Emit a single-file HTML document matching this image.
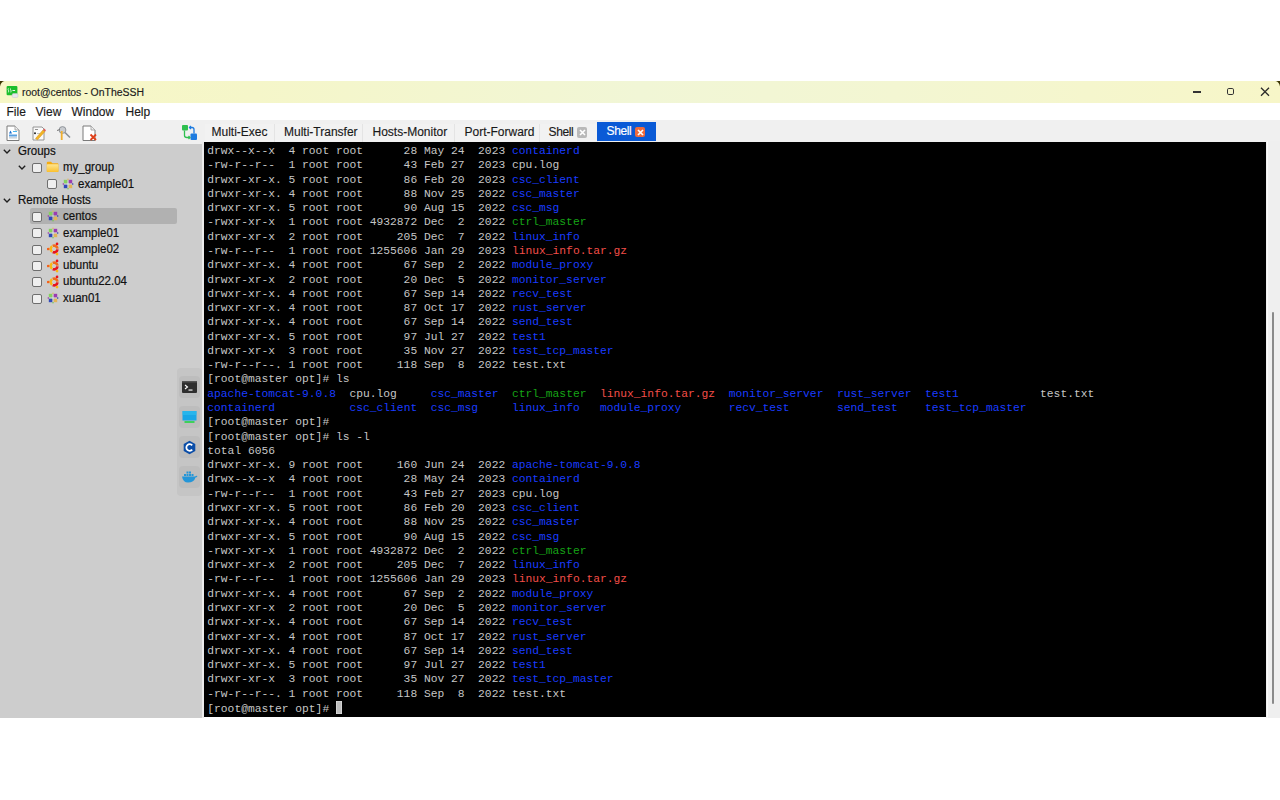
<!DOCTYPE html>
<html><head><meta charset="utf-8">
<style>
html,body{margin:0;padding:0;width:1280px;height:800px;overflow:hidden;background:#fff;}
body{position:relative;font-family:"Liberation Sans",sans-serif;color:#1a1a1a}
.a{position:absolute}
#title{left:0;top:81px;width:1280px;height:22.4px;background:linear-gradient(90deg,#f7f7c6 0%,#f5f6c9 20%,#f1f6d6 50%,#f3f6d2 70%,#f7f6c8 100%)}
#menu{left:0;top:103px;width:1280px;height:17px;background:#fff}
#tool{left:0;top:120px;width:1280px;height:24px;background:#f0f0f0}
#left{left:0;top:144px;width:202px;height:574px;background:#cdcdcd}
#strip{left:202px;top:142px;width:2px;height:576px;background:#ececec}
#term{left:204px;top:142px;width:1062.5px;height:575px;background:#000;overflow:hidden}
#sb{left:1266px;top:141px;width:14px;height:577px;background:#efefef}
#sbw{left:1266.5px;top:141px;width:1.5px;height:577px;background:#fafafa}
#thumb{left:1272px;top:312px;width:2px;height:392px;background:#8a8a8a;border-radius:1px}
.t{position:absolute;font-size:12px;white-space:nowrap;line-height:14px;-webkit-text-stroke:0.15px currentColor}
.tl{position:absolute;left:3.3px;font-family:"Liberation Mono",monospace;font-size:11.29px;line-height:14.28px;height:14.28px;color:#c6c6c6;white-space:pre}
.cur{display:inline-block;width:6.4px;height:13.2px;background:#bdbdbd;vertical-align:-2px;box-shadow:inset 0 0 0 0.6px #e0e0e0}
.tab{position:absolute;top:123.5px;height:18px;background:#f2f2f2;border-right:1px solid #e4e4e4}
.tabt{position:absolute;font-size:12px;white-space:nowrap;color:#1a1a1a;-webkit-text-stroke:0.15px currentColor}
.cb{position:absolute;width:8px;height:8px;border:1.2px solid #6e6e6e;border-radius:2px;background:#efefef}
.tr{position:absolute;font-size:12.4px;white-space:nowrap;color:#101010;-webkit-text-stroke:0.2px #101010;transform:scaleX(.928);transform-origin:0 0}
.chev{position:absolute}
</style></head><body>
<div id="title" class="a"></div>
<svg class="a" style="left:0;top:81px" width="5" height="6" viewBox="0 0 5 6"><path d="M0 0H4.5Q1 0.6 0 5.5Z" fill="#3a3400"/></svg>
<svg class="a" style="left:1275px;top:81px" width="5" height="6" viewBox="0 0 5 6"><path d="M5 0H0.5Q4 0.6 5 5.5Z" fill="#3a3400"/></svg>
<!-- app icon -->
<svg class="a" style="left:6px;top:85px" width="13" height="13" viewBox="0 0 13 13">
 <rect x="0.6" y="0.9" width="10.8" height="9.3" rx="1" fill="#1bbf2c"/>
 <path d="M2.6 3.4Q1.6 3.6 2.2 4.8Q3.2 5.8 2.4 7.4M5 3.4Q4 3.6 4.6 4.8Q5.6 5.8 4.8 7.4" fill="none" stroke="#d8f5d8" stroke-width="0.9"/>
 <rect x="6.5" y="5" width="2.6" height="1" fill="#e8f8e8"/>
 <rect x="6.2" y="8.6" width="5.8" height="3.9" rx="1.2" fill="#e6e6ee" stroke="#c8c8d0" stroke-width="0.5"/>
</svg>
<div class="t" style="left:22px;top:82.5px;line-height:20px;font-size:10.45px;color:#1c1c1c">root@centos - OnTheSSH</div>
<!-- window controls -->
<div class="a" style="left:1192.5px;top:91.2px;width:8px;height:1.5px;background:#333"></div>
<div class="a" style="left:1226.5px;top:87.5px;width:5.6px;height:5.6px;border:1.5px solid #333;border-radius:1.8px"></div>
<svg class="a" style="left:1260px;top:87px" width="10" height="10" viewBox="0 0 10 10"><path d="M1 0.8L9 8.8M9 0.8L1 8.8" stroke="#2a2a2a" stroke-width="1.25"/></svg>

<div id="menu" class="a"></div>
<div class="t" style="left:6.5px;top:104px;line-height:16px">File</div>
<div class="t" style="left:35.5px;top:104px;line-height:16px">View</div>
<div class="t" style="left:71.5px;top:104px;line-height:16px">Window</div>
<div class="t" style="left:125.5px;top:104px;line-height:16px">Help</div>

<div id="tool" class="a"></div>
<!-- toolbar icons -->
<svg class="a" style="left:6px;top:125px" width="14" height="17" viewBox="0 0 14 17">
 <path d="M1 1H9L13 5V15.5H1Z" fill="#fff" stroke="#7a7a7a" stroke-width="1"/>
 <path d="M9 1V5H13" fill="#eee" stroke="#9a9a9a" stroke-width="0.8"/>
 <path d="M3 8.5L4.5 5.5L6 8.5Z" fill="#1a6fd0"/>
 <rect x="7" y="6" width="4" height="1" fill="#49b6f0"/>
 <rect x="3" y="9.5" width="8" height="2" fill="#5aa0e0"/>
 <rect x="3" y="12.5" width="8" height="0.8" fill="#9ab"/>
</svg>
<svg class="a" style="left:32px;top:126px" width="15" height="15" viewBox="0 0 15 15">
 <path d="M1 1H10L12 3V14H1Z" fill="#fafafa" stroke="#8a8a8a" stroke-width="0.9"/>
 <rect x="3" y="3" width="3" height="0.8" fill="#777"/>
 <circle cx="3" cy="7.2" r="1" fill="#222"/>
 <rect x="5" y="7" width="3" height="0.6" fill="#999"/>
 <path d="M3.5 12.5L11 4L13 5.5L5.5 13.8Z" fill="#f2b526" stroke="#d48f10" stroke-width="0.5"/>
 <path d="M11 4L12.2 2.6L14 4.2L13 5.5Z" fill="#e05a5a"/>
</svg>
<svg class="a" style="left:56px;top:125px" width="16" height="16" viewBox="0 0 16 16">
 <circle cx="6.5" cy="5" r="3.4" fill="#c9ccd0" stroke="#8a8f95" stroke-width="0.9"/>
 <path d="M9 7.5L14 12.5" stroke="#8a8f95" stroke-width="1.6"/>
 <rect x="4.8" y="6" width="1.8" height="9" fill="#f0b030"/>
 <path d="M1 5.5L4 4.5" stroke="#777" stroke-width="1"/>
</svg>
<svg class="a" style="left:82px;top:125px" width="16" height="17" viewBox="0 0 16 17">
 <path d="M1 1H9L13 5V15.5H1Z" fill="#fff" stroke="#7a7a7a" stroke-width="1"/>
 <path d="M9 1V5H13" fill="#eee" stroke="#9a9a9a" stroke-width="0.8"/>
 <path d="M8.5 9.5L14 15M14 9.5L8.5 15" stroke="#e0401a" stroke-width="1.8"/>
</svg>
<!-- sync icon -->
<svg class="a" style="left:181px;top:124px" width="17" height="17" viewBox="0 0 17 17">
 <rect x="1" y="1" width="6" height="5.5" rx="1" fill="#2fbf4f"/>
 <rect x="9.5" y="9.5" width="6.5" height="6.5" rx="1" fill="#1d7be0"/>
 <path d="M3.5 6.5V11.5Q3.5 13.5 6 13.5H8.5" fill="none" stroke="#2fbf4f" stroke-width="1.3"/>
 <path d="M7.5 12L9 13.5L7.5 15" fill="none" stroke="#2fbf4f" stroke-width="1.2"/>
 <path d="M8.5 3.5H11Q13 3.5 13 5.5V9.5" fill="none" stroke="#1d7be0" stroke-width="1.3"/>
 <path d="M10 2L8.5 3.5L10 5" fill="none" stroke="#1d7be0" stroke-width="1.2"/>
</svg>
<!-- tabs -->
<div class="tab" style="left:204.5px;width:69px"></div>
<div class="tab" style="left:274.5px;width:87px"></div>
<div class="tab" style="left:362.5px;width:91.5px"></div>
<div class="tab" style="left:455px;width:83.5px"></div>
<div class="tab" style="left:539.5px;width:57px"></div>
<div class="tabt" style="left:211.5px;top:123px;line-height:18px">Multi-Exec</div>
<div class="tabt" style="left:284px;top:123px;line-height:18px">Multi-Transfer</div>
<div class="tabt" style="left:372.5px;top:123px;line-height:18px">Hosts-Monitor</div>
<div class="tabt" style="left:464.5px;top:123px;line-height:18px">Port-Forward</div>
<div class="tabt" style="left:548.5px;top:123px;line-height:18px;letter-spacing:-0.35px">Shell</div>
<div class="a" style="left:576.5px;top:127px;width:10.5px;height:10.5px;background:#b9b9b9;border-radius:2px"></div>
<svg class="a" style="left:576.5px;top:127px" width="11" height="11" viewBox="0 0 11 11"><path d="M3 3L8 8M8 3L3 8" stroke="#fff" stroke-width="1.6"/></svg>
<div class="a" style="left:597px;top:121.5px;width:58.5px;height:19.5px;background:#0a5ad6"></div>
<div class="tabt" style="left:606.5px;top:122px;line-height:18px;color:#fff;letter-spacing:-0.35px">Shell</div>
<div class="a" style="left:634.5px;top:126.5px;width:10.5px;height:10.5px;background:#f06a3c;border-radius:2px"></div>
<svg class="a" style="left:634.5px;top:126.5px" width="11" height="11" viewBox="0 0 11 11"><path d="M3 3L8 8M8 3L3 8" stroke="#fff" stroke-width="1.7"/></svg>

<div id="left" class="a"></div>
<!--TREE-->
<div class="a" style="left:30px;top:207.5px;width:147px;height:16.5px;background:#b1b1b1;border-radius:2px"></div>
<svg class="a" style="left:3.3px;top:149.2px" width="8" height="5" viewBox="0 0 8 5"><path d="M0.8 0.8L4 4L7.2 0.8" fill="none" stroke="#1e1e1e" stroke-width="1.35"/></svg>
<div class="tr" style="left:17.5px;top:144.20px;line-height:14px">Groups</div>
<svg class="a" style="left:18.2px;top:165px" width="8" height="5" viewBox="0 0 8 5"><path d="M0.8 0.8L4 4L7.2 0.8" fill="none" stroke="#1e1e1e" stroke-width="1.35"/></svg>
<div class="cb" style="left:32.0px;top:162.6px"></div>
<svg class="a" style="left:46px;top:161px" width="13" height="12" viewBox="0 0 13 12">
 <defs><linearGradient id="fg" x1="0" y1="0" x2="0" y2="1"><stop offset="0" stop-color="#fde592"/><stop offset="1" stop-color="#fbc02e"/></linearGradient></defs>
 <path d="M0.8 1.8Q0.8 0.8 1.8 0.8H5L6.4 2.2H11.6Q12.4 2.2 12.4 3.2V10.2Q12.4 11 11.6 11H1.6Q0.8 11 0.8 10.2Z" fill="#f6ac10"/>
 <path d="M0.8 4Q0.8 3.3 1.6 3.3H11.6Q12.4 3.3 12.4 4V10.2Q12.4 11 11.6 11H1.6Q0.8 11 0.8 10.2Z" fill="url(#fg)"/>
</svg>
<div class="tr" style="left:63.3px;top:160.48px;line-height:14px">my_group</div>
<div class="cb" style="left:47.0px;top:179.0px"></div>
<svg class="a" style="left:62.0px;top:177.5px" width="12" height="12" viewBox="0 0 12 12">
 <rect x="1.8" y="1.8" width="3.5" height="3.5" fill="#86d160"/>
 <rect x="6.7" y="1.8" width="3.5" height="3.5" fill="#9b3cb0"/>
 <rect x="6.7" y="6.7" width="3.5" height="3.5" fill="#e2b458"/>
 <rect x="1.8" y="6.7" width="3.5" height="3.5" fill="#3048b8"/>
 <path d="M5 1.8L6 0.2L7 1.8Z" fill="#e2b458"/>
 <path d="M10.2 5L11.8 6L10.2 7Z" fill="#2a3aa8"/>
 <path d="M5 10.2L6 11.8L7 10.2Z" fill="#6ac848"/>
 <path d="M1.8 5L0.2 6L1.8 7Z" fill="#9a30a8"/>
 <path d="M5.4 5.4H6.6V6.6H5.4Z" fill="#d8ecf4"/>
</svg>
<div class="tr" style="left:78px;top:176.76px;line-height:14px">example01</div>
<svg class="a" style="left:3.3px;top:198.2px" width="8" height="5" viewBox="0 0 8 5"><path d="M0.8 0.8L4 4L7.2 0.8" fill="none" stroke="#1e1e1e" stroke-width="1.35"/></svg>
<div class="tr" style="left:17.5px;top:193.04px;line-height:14px">Remote Hosts</div>
<div class="cb" style="left:32.0px;top:211.8px"></div>
<svg class="a" style="left:47.0px;top:210.29999999999998px" width="12" height="12" viewBox="0 0 12 12">
 <rect x="1.8" y="1.8" width="3.5" height="3.5" fill="#86d160"/>
 <rect x="6.7" y="1.8" width="3.5" height="3.5" fill="#9b3cb0"/>
 <rect x="6.7" y="6.7" width="3.5" height="3.5" fill="#e2b458"/>
 <rect x="1.8" y="6.7" width="3.5" height="3.5" fill="#3048b8"/>
 <path d="M5 1.8L6 0.2L7 1.8Z" fill="#e2b458"/>
 <path d="M10.2 5L11.8 6L10.2 7Z" fill="#2a3aa8"/>
 <path d="M5 10.2L6 11.8L7 10.2Z" fill="#6ac848"/>
 <path d="M1.8 5L0.2 6L1.8 7Z" fill="#9a30a8"/>
 <path d="M5.4 5.4H6.6V6.6H5.4Z" fill="#d8ecf4"/>
</svg>
<div class="tr" style="left:63px;top:209.32px;line-height:14px">centos</div>
<div class="cb" style="left:32.0px;top:228.2px"></div>
<svg class="a" style="left:47.0px;top:226.7px" width="12" height="12" viewBox="0 0 12 12">
 <rect x="1.8" y="1.8" width="3.5" height="3.5" fill="#86d160"/>
 <rect x="6.7" y="1.8" width="3.5" height="3.5" fill="#9b3cb0"/>
 <rect x="6.7" y="6.7" width="3.5" height="3.5" fill="#e2b458"/>
 <rect x="1.8" y="6.7" width="3.5" height="3.5" fill="#3048b8"/>
 <path d="M5 1.8L6 0.2L7 1.8Z" fill="#e2b458"/>
 <path d="M10.2 5L11.8 6L10.2 7Z" fill="#2a3aa8"/>
 <path d="M5 10.2L6 11.8L7 10.2Z" fill="#6ac848"/>
 <path d="M1.8 5L0.2 6L1.8 7Z" fill="#9a30a8"/>
 <path d="M5.4 5.4H6.6V6.6H5.4Z" fill="#d8ecf4"/>
</svg>
<div class="tr" style="left:63px;top:225.60px;line-height:14px">example01</div>
<div class="cb" style="left:32.0px;top:244.6px"></div>
<svg class="a" style="left:46.5px;top:242.30px" width="14" height="14" viewBox="0 0 14 14"><path d="M5.72 3.89A3.4 3.4 0 0 1 10.48 6.64" fill="none" stroke="#f36b1c" stroke-width="2.6"/><path d="M10.48 7.36A3.4 3.4 0 0 1 5.72 10.11" fill="none" stroke="#e8141c" stroke-width="2.6"/><path d="M5.10 9.75A3.4 3.4 0 0 1 5.10 4.25" fill="none" stroke="#fbb714" stroke-width="2.6"/><circle cx="1.20" cy="7.00" r="1.35" fill="#f4601a"/><circle cx="10.05" cy="1.89" r="1.35" fill="#e8141c"/><circle cx="10.05" cy="12.11" r="1.35" fill="#fbb714"/></svg>
<div class="tr" style="left:63px;top:241.88px;line-height:14px">example02</div>
<div class="cb" style="left:32.0px;top:261.0px"></div>
<svg class="a" style="left:46.5px;top:258.70px" width="14" height="14" viewBox="0 0 14 14"><path d="M5.72 3.89A3.4 3.4 0 0 1 10.48 6.64" fill="none" stroke="#f36b1c" stroke-width="2.6"/><path d="M10.48 7.36A3.4 3.4 0 0 1 5.72 10.11" fill="none" stroke="#e8141c" stroke-width="2.6"/><path d="M5.10 9.75A3.4 3.4 0 0 1 5.10 4.25" fill="none" stroke="#fbb714" stroke-width="2.6"/><circle cx="1.20" cy="7.00" r="1.35" fill="#f4601a"/><circle cx="10.05" cy="1.89" r="1.35" fill="#e8141c"/><circle cx="10.05" cy="12.11" r="1.35" fill="#fbb714"/></svg>
<div class="tr" style="left:63px;top:258.16px;line-height:14px">ubuntu</div>
<div class="cb" style="left:32.0px;top:277.4px"></div>
<svg class="a" style="left:46.5px;top:275.10px" width="14" height="14" viewBox="0 0 14 14"><path d="M5.72 3.89A3.4 3.4 0 0 1 10.48 6.64" fill="none" stroke="#f36b1c" stroke-width="2.6"/><path d="M10.48 7.36A3.4 3.4 0 0 1 5.72 10.11" fill="none" stroke="#e8141c" stroke-width="2.6"/><path d="M5.10 9.75A3.4 3.4 0 0 1 5.10 4.25" fill="none" stroke="#fbb714" stroke-width="2.6"/><circle cx="1.20" cy="7.00" r="1.35" fill="#f4601a"/><circle cx="10.05" cy="1.89" r="1.35" fill="#e8141c"/><circle cx="10.05" cy="12.11" r="1.35" fill="#fbb714"/></svg>
<div class="tr" style="left:63px;top:274.44px;line-height:14px">ubuntu22.04</div>
<div class="cb" style="left:32.0px;top:293.8px"></div>
<svg class="a" style="left:47.0px;top:292.3px" width="12" height="12" viewBox="0 0 12 12">
 <rect x="1.8" y="1.8" width="3.5" height="3.5" fill="#86d160"/>
 <rect x="6.7" y="1.8" width="3.5" height="3.5" fill="#9b3cb0"/>
 <rect x="6.7" y="6.7" width="3.5" height="3.5" fill="#e2b458"/>
 <rect x="1.8" y="6.7" width="3.5" height="3.5" fill="#3048b8"/>
 <path d="M5 1.8L6 0.2L7 1.8Z" fill="#e2b458"/>
 <path d="M10.2 5L11.8 6L10.2 7Z" fill="#2a3aa8"/>
 <path d="M5 10.2L6 11.8L7 10.2Z" fill="#6ac848"/>
 <path d="M1.8 5L0.2 6L1.8 7Z" fill="#9a30a8"/>
 <path d="M5.4 5.4H6.6V6.6H5.4Z" fill="#d8ecf4"/>
</svg>
<div class="tr" style="left:63px;top:290.72px;line-height:14px">xuan01</div>
<div class="a" style="left:177px;top:368px;width:25px;height:128px;background:#c5c5c5;border-radius:4px"></div>
<div class="a" style="left:179px;top:376px;width:21px;height:22px;background:#bdbdbd;border-radius:4px"></div>
<div class="a" style="left:179px;top:406px;width:21px;height:22px;background:#bdbdbd;border-radius:4px"></div>
<div class="a" style="left:179px;top:436px;width:21px;height:22px;background:#bdbdbd;border-radius:4px"></div>
<div class="a" style="left:179px;top:466px;width:21px;height:22px;background:#bdbdbd;border-radius:4px"></div>
<svg class="a" style="left:182px;top:380px" width="15" height="14" viewBox="0 0 15 14">
 <rect x="0" y="1" width="15" height="12" rx="1" fill="#2f2f2f"/>
 <rect x="0" y="1" width="15" height="1.5" fill="#555"/>
 <path d="M3 5L5.5 7L3 9" fill="none" stroke="#fff" stroke-width="1.1"/>
 <rect x="6.5" y="9.5" width="4" height="1.1" fill="#fff"/>
</svg>
<svg class="a" style="left:182px;top:410px" width="15" height="14" viewBox="0 0 15 14">
 <rect x="0.5" y="1" width="14" height="9.5" fill="#19a6e6"/>
 <rect x="0.5" y="1" width="14" height="4" fill="#30c0f0" opacity=".6"/>
 <rect x="2.5" y="11" width="10" height="2" fill="#3fd05a"/>
</svg>
<svg class="a" style="left:182px;top:440px" width="15" height="15" viewBox="0 0 15 15">
 <path d="M7.5 0.8L13.3 4.1V10.9L7.5 14.2L1.7 10.9V4.1Z" fill="#0a4da8"/>
 <path d="M10.2 5.4A3.3 3.3 0 1 0 10.2 9.6" fill="none" stroke="#fff" stroke-width="1.8"/>
</svg>
<svg class="a" style="left:181px;top:470px" width="17" height="14" viewBox="0 0 17 14">
 <path d="M1 6.5H14Q15.5 5.5 16.5 6Q15.5 7.5 14.5 7.5Q13 12.5 7 12.5Q2 12.5 1 6.5Z" fill="#2496d8"/>
 <rect x="3" y="4" width="2" height="2" fill="#2496d8"/><rect x="5.5" y="4" width="2" height="2" fill="#2496d8"/>
 <rect x="8" y="4" width="2" height="2" fill="#2496d8"/><rect x="5.5" y="1.5" width="2" height="2" fill="#2496d8"/>
 <rect x="8" y="1.5" width="2" height="2" fill="#2496d8"/><rect x="10.5" y="4" width="2" height="2" fill="#2496d8"/>
</svg>
<div id="strip" class="a"></div>
<div id="term" class="a">
<div class="tl" style="top:2.00px">drwx--x--x  4 root root      28 May 24  2023 <span style="color:#1a3cff">containerd</span></div>
<div class="tl" style="top:16.28px">-rw-r--r--  1 root root      43 Feb 27  2023 cpu.log</div>
<div class="tl" style="top:30.56px">drwxr-xr-x. 5 root root      86 Feb 20  2023 <span style="color:#1a3cff">csc_client</span></div>
<div class="tl" style="top:44.84px">drwxr-xr-x. 4 root root      88 Nov 25  2022 <span style="color:#1a3cff">csc_master</span></div>
<div class="tl" style="top:59.12px">drwxr-xr-x. 5 root root      90 Aug 15  2022 <span style="color:#1a3cff">csc_msg</span></div>
<div class="tl" style="top:73.40px">-rwxr-xr-x  1 root root 4932872 Dec  2  2022 <span style="color:#16a316">ctrl_master</span></div>
<div class="tl" style="top:87.68px">drwxr-xr-x  2 root root     205 Dec  7  2022 <span style="color:#1a3cff">linux_info</span></div>
<div class="tl" style="top:101.96px">-rw-r--r--  1 root root 1255606 Jan 29  2023 <span style="color:#f24e48">linux_info.tar.gz</span></div>
<div class="tl" style="top:116.24px">drwxr-xr-x. 4 root root      67 Sep  2  2022 <span style="color:#1a3cff">module_proxy</span></div>
<div class="tl" style="top:130.52px">drwxr-xr-x  2 root root      20 Dec  5  2022 <span style="color:#1a3cff">monitor_server</span></div>
<div class="tl" style="top:144.80px">drwxr-xr-x. 4 root root      67 Sep 14  2022 <span style="color:#1a3cff">recv_test</span></div>
<div class="tl" style="top:159.08px">drwxr-xr-x. 4 root root      87 Oct 17  2022 <span style="color:#1a3cff">rust_server</span></div>
<div class="tl" style="top:173.36px">drwxr-xr-x. 4 root root      67 Sep 14  2022 <span style="color:#1a3cff">send_test</span></div>
<div class="tl" style="top:187.64px">drwxr-xr-x. 5 root root      97 Jul 27  2022 <span style="color:#1a3cff">test1</span></div>
<div class="tl" style="top:201.92px">drwxr-xr-x  3 root root      35 Nov 27  2022 <span style="color:#1a3cff">test_tcp_master</span></div>
<div class="tl" style="top:216.20px">-rw-r--r--. 1 root root     118 Sep  8  2022 test.txt</div>
<div class="tl" style="top:230.48px">[root@master opt]# ls</div>
<div class="tl" style="top:244.76px"><span style="color:#1a3cff">apache-tomcat-9.0.8</span>  cpu.log     <span style="color:#1a3cff">csc_master</span>  <span style="color:#16a316">ctrl_master</span>  <span style="color:#f24e48">linux_info.tar.gz</span>  <span style="color:#1a3cff">monitor_server</span>  <span style="color:#1a3cff">rust_server</span>  <span style="color:#1a3cff">test1</span>            test.txt</div>
<div class="tl" style="top:259.04px"><span style="color:#1a3cff">containerd</span>           <span style="color:#1a3cff">csc_client</span>  <span style="color:#1a3cff">csc_msg</span>     <span style="color:#1a3cff">linux_info</span>   <span style="color:#1a3cff">module_proxy</span>       <span style="color:#1a3cff">recv_test</span>       <span style="color:#1a3cff">send_test</span>    <span style="color:#1a3cff">test_tcp_master</span></div>
<div class="tl" style="top:273.32px">[root@master opt]#</div>
<div class="tl" style="top:287.60px">[root@master opt]# ls -l</div>
<div class="tl" style="top:301.88px">total 6056</div>
<div class="tl" style="top:316.16px">drwxr-xr-x. 9 root root     160 Jun 24  2022 <span style="color:#1a3cff">apache-tomcat-9.0.8</span></div>
<div class="tl" style="top:330.44px">drwx--x--x  4 root root      28 May 24  2023 <span style="color:#1a3cff">containerd</span></div>
<div class="tl" style="top:344.72px">-rw-r--r--  1 root root      43 Feb 27  2023 cpu.log</div>
<div class="tl" style="top:359.00px">drwxr-xr-x. 5 root root      86 Feb 20  2023 <span style="color:#1a3cff">csc_client</span></div>
<div class="tl" style="top:373.28px">drwxr-xr-x. 4 root root      88 Nov 25  2022 <span style="color:#1a3cff">csc_master</span></div>
<div class="tl" style="top:387.56px">drwxr-xr-x. 5 root root      90 Aug 15  2022 <span style="color:#1a3cff">csc_msg</span></div>
<div class="tl" style="top:401.84px">-rwxr-xr-x  1 root root 4932872 Dec  2  2022 <span style="color:#16a316">ctrl_master</span></div>
<div class="tl" style="top:416.12px">drwxr-xr-x  2 root root     205 Dec  7  2022 <span style="color:#1a3cff">linux_info</span></div>
<div class="tl" style="top:430.40px">-rw-r--r--  1 root root 1255606 Jan 29  2023 <span style="color:#f24e48">linux_info.tar.gz</span></div>
<div class="tl" style="top:444.68px">drwxr-xr-x. 4 root root      67 Sep  2  2022 <span style="color:#1a3cff">module_proxy</span></div>
<div class="tl" style="top:458.96px">drwxr-xr-x  2 root root      20 Dec  5  2022 <span style="color:#1a3cff">monitor_server</span></div>
<div class="tl" style="top:473.24px">drwxr-xr-x. 4 root root      67 Sep 14  2022 <span style="color:#1a3cff">recv_test</span></div>
<div class="tl" style="top:487.52px">drwxr-xr-x. 4 root root      87 Oct 17  2022 <span style="color:#1a3cff">rust_server</span></div>
<div class="tl" style="top:501.80px">drwxr-xr-x. 4 root root      67 Sep 14  2022 <span style="color:#1a3cff">send_test</span></div>
<div class="tl" style="top:516.08px">drwxr-xr-x. 5 root root      97 Jul 27  2022 <span style="color:#1a3cff">test1</span></div>
<div class="tl" style="top:530.36px">drwxr-xr-x  3 root root      35 Nov 27  2022 <span style="color:#1a3cff">test_tcp_master</span></div>
<div class="tl" style="top:544.64px">-rw-r--r--. 1 root root     118 Sep  8  2022 test.txt</div>
<div class="tl" style="top:558.92px">[root@master opt]# <span class="cur"></span></div>

</div>
<div id="sb" class="a"></div>
<div id="sbw" class="a"></div>
<div id="thumb" class="a"></div>
</body></html>
